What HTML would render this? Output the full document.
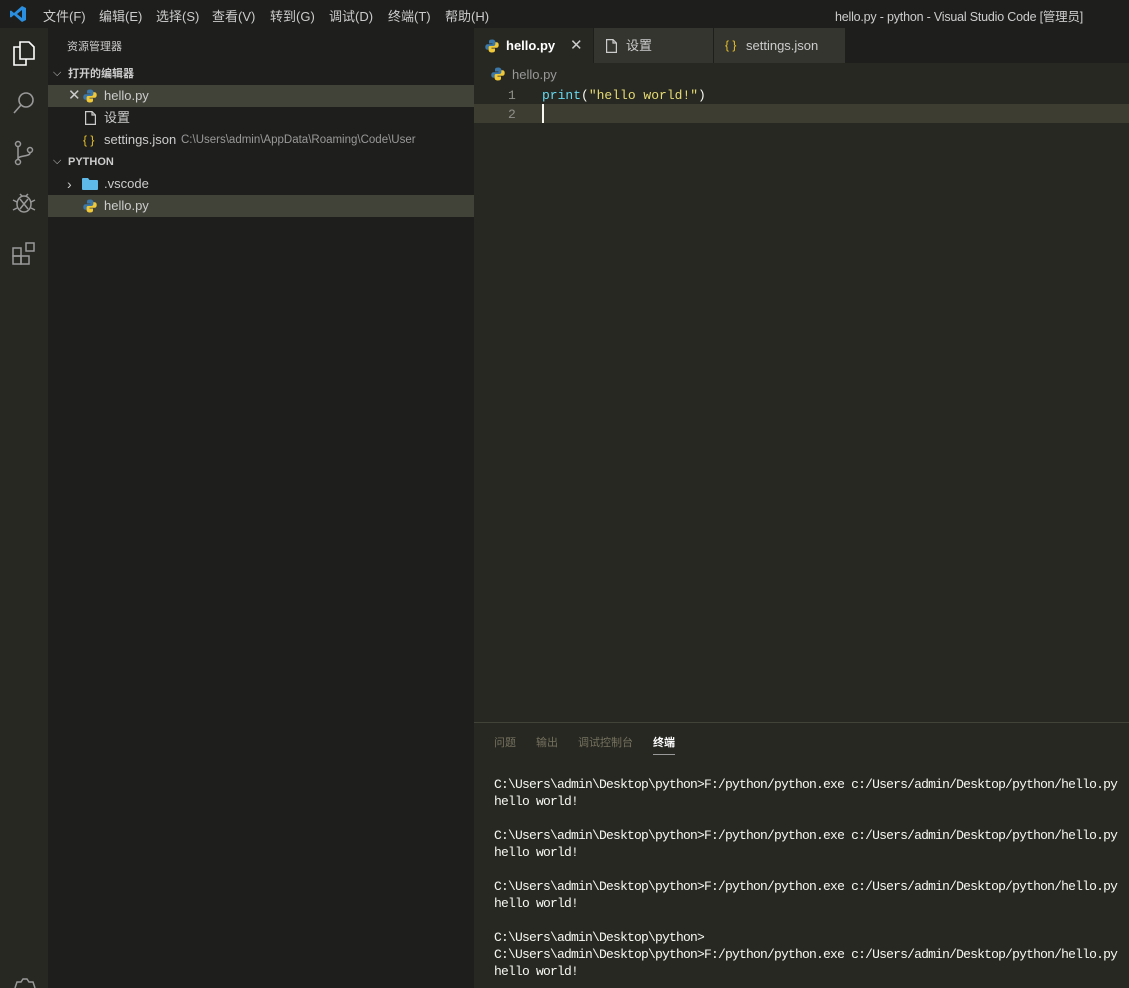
<!DOCTYPE html>
<html><head><meta charset="utf-8"><style>
*{margin:0;padding:0;box-sizing:border-box}
body{width:1129px;height:988px;overflow:hidden;background:#272822;font-family:"Liberation Sans","Noto Sans CJK SC",sans-serif;font-size:13px;color:#ccc;position:relative}
.abs{position:absolute}
.title{left:0;top:0;width:1129px;height:28px;background:#1e1f1c}
.menu{top:6px;font-size:13px;color:#ccc}
.act{left:0;top:28px;width:48px;height:960px;background:#272822}
.side{left:48px;top:28px;width:426px;height:960px;background:#1e1f1c}
.row{position:absolute;left:0;width:426px;height:22px;line-height:22px;color:#ccc}
.sel{background:#414339}
.tabs{left:474px;top:28px;width:655px;height:35px;background:#1e1f1c}
.tab{position:absolute;top:0;height:35px;line-height:35px;background:#34352f;color:#ccc}
.mono{font-family:"Liberation Mono","DejaVu Sans Mono",monospace}
.term{left:494px;top:776px;font-size:13px;line-height:17px;color:#f8f8f2;white-space:pre;letter-spacing:-0.8px}
</style></head><body>
<div class="abs title"></div>
<svg class="abs" style="left:9px;top:5px" width="18" height="18" viewBox="0 0 18 18"><path d="M13 1 L17 3 V15 L13 17 L5 10 L2 12.5 L1 12 V6 L2 5.5 L5 8 Z M13 5 L8 9 L13 13 Z" fill="#2a8fe0"/></svg>
<div class="abs menu" style="left:43px">文件(F)</div>
<div class="abs menu" style="left:99px">编辑(E)</div>
<div class="abs menu" style="left:156px">选择(S)</div>
<div class="abs menu" style="left:212px">查看(V)</div>
<div class="abs menu" style="left:270px">转到(G)</div>
<div class="abs menu" style="left:329px">调试(D)</div>
<div class="abs menu" style="left:388px">终端(T)</div>
<div class="abs menu" style="left:445px">帮助(H)</div>
<div class="abs menu" style="left:835px;font-size:12.5px;letter-spacing:-0.2px">hello.py - python - Visual Studio Code [管理员]</div>

<div class="abs act"></div>
<svg class="abs" style="left:12px;top:40px" width="24" height="26" viewBox="0 0 24 26" fill="none" stroke="#fff" stroke-width="1.6"><path d="M8 2 H17 L22 7 V19 H8 Z"/><path d="M8 7 H2 V25 H14 V19"/></svg>
<svg class="abs" style="left:12px;top:91px" width="24" height="24" viewBox="0 0 24 24" fill="none" stroke="#999" stroke-width="1.6"><circle cx="14" cy="9" r="7"/><path d="M9 14 L2 22"/></svg>
<svg class="abs" style="left:12px;top:140px" width="24" height="26" viewBox="0 0 24 26" fill="none" stroke="#999" stroke-width="1.5"><circle cx="6" cy="4" r="2.5"/><circle cx="6" cy="22" r="2.5"/><circle cx="18" cy="10" r="2.5"/><path d="M6 7 V19 M18 13 C18 17 6 15 6 19"/></svg>
<svg class="abs" style="left:11px;top:190px" width="26" height="26" viewBox="0 0 26 26" fill="none" stroke="#999" stroke-width="1.5"><ellipse cx="13" cy="14" rx="7" ry="8"/><path d="M9 9 L17 19 M17 9 L9 19 M2 10 L6 12 M24 10 L20 12 M2 20 L6 18 M24 20 L20 18 M9 4 L11 6 M17 4 L15 6"/></svg>
<svg class="abs" style="left:12px;top:242px" width="24" height="24" viewBox="0 0 24 24" fill="none" stroke="#999" stroke-width="1.5"><rect x="1" y="6" width="8" height="8"/><rect x="1" y="14" width="8" height="8"/><rect x="9" y="14" width="8" height="8"/><rect x="14" y="1" width="8" height="8"/></svg>
<svg class="abs" style="left:14px;top:978px" width="22" height="10" viewBox="0 0 22 10" fill="none" stroke="#999" stroke-width="1.5"><path d="M1 10 L3 4 L7 4 L9 1 L13 1 L15 4 L19 4 L21 10"/></svg>

<div class="abs side">
 <div class="abs" style="left:19px;top:10px;font-size:11px;color:#ccc">资源管理器</div>
 <div class="row" style="top:35px;font-size:11px;font-weight:bold"><span style="position:absolute;left:5px;top:-1px;font-weight:normal;color:#ccc">⌵</span><span style="position:absolute;left:20px">打开的编辑器</span></div>
 <div class="row sel" style="top:57px"><span style="position:absolute;left:20px;font-size:15px">✕</span><svg style="position:absolute;left:35px;top:4px" width="14" height="14" viewBox="0 0 14 14"><path d="M7 0.5 C4 0.5 4 2 4 3 V4.5 H7.5 V5.2 H2.5 C1 5.2 0.3 6.5 0.3 8 C0.3 9.6 1 10.7 2.5 10.7 H3.7 V9 C3.7 7.8 4.6 7 5.7 7 H9 C10 7 10.4 6.3 10.4 5.4 V3 C10.4 1.5 9 0.5 7 0.5Z" fill="#3b77a8"/><path d="M7 13.5 C10 13.5 10 12 10 11 V9.5 H6.5 V8.8 H11.5 C13 8.8 13.7 7.5 13.7 6 C13.7 4.4 13 3.3 11.5 3.3 H10.3 V5 C10.3 6.2 9.4 7 8.3 7 H5 C4 7 3.6 7.7 3.6 8.6 V11 C3.6 12.5 5 13.5 7 13.5Z" fill="#f0c93a"/></svg><span style="position:absolute;left:56px">hello.py</span></div>
 <div class="row" style="top:79px"><svg style="position:absolute;left:37px;top:4px" width="11" height="14" viewBox="0 0 11 14" fill="none" stroke="#ccc" stroke-width="1.2"><path d="M0.6 0.6 H7 L10.4 4 V13.4 H0.6 Z M7 0.6 V4 H10.4"/></svg><span style="position:absolute;left:56px">设置</span></div>
 <div class="row" style="top:101px"><span style="position:absolute;left:35px;color:#e8c22c;font-size:12px">{ }</span><span style="position:absolute;left:56px">settings.json</span><span style="position:absolute;left:133px;font-size:11.5px;color:#999">C:\Users\admin\AppData\Roaming\Code\User</span></div>
 <div class="row" style="top:123px;font-size:11px;font-weight:bold"><span style="position:absolute;left:5px;top:-1px;font-weight:normal">⌵</span><span style="position:absolute;left:20px">PYTHON</span></div>
 <div class="row" style="top:145px"><span style="position:absolute;left:19px;font-size:14px">›</span><svg style="position:absolute;left:34px;top:5px" width="16" height="12" viewBox="0 0 16 12"><path d="M0 1 Q0 0 1 0 H6 L7.5 2 H15 Q16 2 16 3 V11 Q16 12 15 12 H1 Q0 12 0 11 Z" fill="#5eb8e8"/></svg><span style="position:absolute;left:56px">.vscode</span></div>
 <div class="row sel" style="top:167px"><svg style="position:absolute;left:35px;top:4px" width="14" height="14" viewBox="0 0 14 14"><path d="M7 0.5 C4 0.5 4 2 4 3 V4.5 H7.5 V5.2 H2.5 C1 5.2 0.3 6.5 0.3 8 C0.3 9.6 1 10.7 2.5 10.7 H3.7 V9 C3.7 7.8 4.6 7 5.7 7 H9 C10 7 10.4 6.3 10.4 5.4 V3 C10.4 1.5 9 0.5 7 0.5Z" fill="#3b77a8"/><path d="M7 13.5 C10 13.5 10 12 10 11 V9.5 H6.5 V8.8 H11.5 C13 8.8 13.7 7.5 13.7 6 C13.7 4.4 13 3.3 11.5 3.3 H10.3 V5 C10.3 6.2 9.4 7 8.3 7 H5 C4 7 3.6 7.7 3.6 8.6 V11 C3.6 12.5 5 13.5 7 13.5Z" fill="#f0c93a"/></svg><span style="position:absolute;left:56px">hello.py</span></div>
</div>

<div class="abs tabs">
 <div class="tab" style="left:0;width:119px;background:#272822;color:#fff"><svg style="position:absolute;left:11px;top:11px" width="14" height="14" viewBox="0 0 14 14"><path d="M7 0.5 C4 0.5 4 2 4 3 V4.5 H7.5 V5.2 H2.5 C1 5.2 0.3 6.5 0.3 8 C0.3 9.6 1 10.7 2.5 10.7 H3.7 V9 C3.7 7.8 4.6 7 5.7 7 H9 C10 7 10.4 6.3 10.4 5.4 V3 C10.4 1.5 9 0.5 7 0.5Z" fill="#3b77a8"/><path d="M7 13.5 C10 13.5 10 12 10 11 V9.5 H6.5 V8.8 H11.5 C13 8.8 13.7 7.5 13.7 6 C13.7 4.4 13 3.3 11.5 3.3 H10.3 V5 C10.3 6.2 9.4 7 8.3 7 H5 C4 7 3.6 7.7 3.6 8.6 V11 C3.6 12.5 5 13.5 7 13.5Z" fill="#f0c93a"/></svg><span style="position:absolute;left:32px;font-weight:bold">hello.py</span><span style="position:absolute;left:96px;font-size:15px;color:#ccc">✕</span></div>
 <div class="tab" style="left:120px;width:119px"><svg style="position:absolute;left:12px;top:11px" width="11" height="14" viewBox="0 0 11 14" fill="none" stroke="#ccc" stroke-width="1.2"><path d="M0.6 0.6 H7 L10.4 4 V13.4 H0.6 Z M7 0.6 V4 H10.4"/></svg><span style="position:absolute;left:32px">设置</span></div>
 <div class="tab" style="left:240px;width:131px"><span style="position:absolute;left:11px;color:#e8c22c;font-size:12px">{ }</span><span style="position:absolute;left:32px">settings.json</span></div>
</div>
<svg class="abs" style="left:491px;top:67px" width="14" height="14" viewBox="0 0 14 14"><path d="M7 0.5 C4 0.5 4 2 4 3 V4.5 H7.5 V5.2 H2.5 C1 5.2 0.3 6.5 0.3 8 C0.3 9.6 1 10.7 2.5 10.7 H3.7 V9 C3.7 7.8 4.6 7 5.7 7 H9 C10 7 10.4 6.3 10.4 5.4 V3 C10.4 1.5 9 0.5 7 0.5Z" fill="#3b77a8"/><path d="M7 13.5 C10 13.5 10 12 10 11 V9.5 H6.5 V8.8 H11.5 C13 8.8 13.7 7.5 13.7 6 C13.7 4.4 13 3.3 11.5 3.3 H10.3 V5 C10.3 6.2 9.4 7 8.3 7 H5 C4 7 3.6 7.7 3.6 8.6 V11 C3.6 12.5 5 13.5 7 13.5Z" fill="#f0c93a"/></svg>
<div class="abs" style="left:512px;top:67px;color:#999">hello.py</div>
<div class="abs" style="left:474px;top:104px;width:655px;height:19px;background:#3e3d32"></div>
<div class="abs" style="left:542px;top:104px;width:2px;height:19px;background:#f8f8f0"></div>
<div class="abs mono" style="left:508px;top:86px;font-size:13px;line-height:19px;color:#90908a">1<br>2</div>
<div class="abs mono" style="left:542px;top:86px;font-size:13px;line-height:19px;white-space:pre"><span style="color:#66d9ef">print</span><span style="color:#f8f8f2">(</span><span style="color:#e6db74">"hello world!"</span><span style="color:#f8f8f2">)</span></div>

<div class="abs" style="left:474px;top:722px;width:655px;height:1px;background:#414339"></div>
<div class="abs" style="left:494px;top:734px;font-size:11px;color:#75715e">问题</div>
<div class="abs" style="left:536px;top:734px;font-size:11px;color:#75715e">输出</div>
<div class="abs" style="left:578px;top:734px;font-size:11px;color:#75715e">调试控制台</div>
<div class="abs" style="left:653px;top:734px;font-size:11px;color:#fff;font-weight:bold">终端</div>
<div class="abs" style="left:653px;top:754px;width:22px;height:1px;background:#999"></div>
<div class="abs mono term">C:\Users\admin\Desktop\python>F:/python/python.exe c:/Users/admin/Desktop/python/hello.py
hello world!

C:\Users\admin\Desktop\python>F:/python/python.exe c:/Users/admin/Desktop/python/hello.py
hello world!

C:\Users\admin\Desktop\python>F:/python/python.exe c:/Users/admin/Desktop/python/hello.py
hello world!

C:\Users\admin\Desktop\python>
C:\Users\admin\Desktop\python>F:/python/python.exe c:/Users/admin/Desktop/python/hello.py
hello world!</div>
</body></html>
